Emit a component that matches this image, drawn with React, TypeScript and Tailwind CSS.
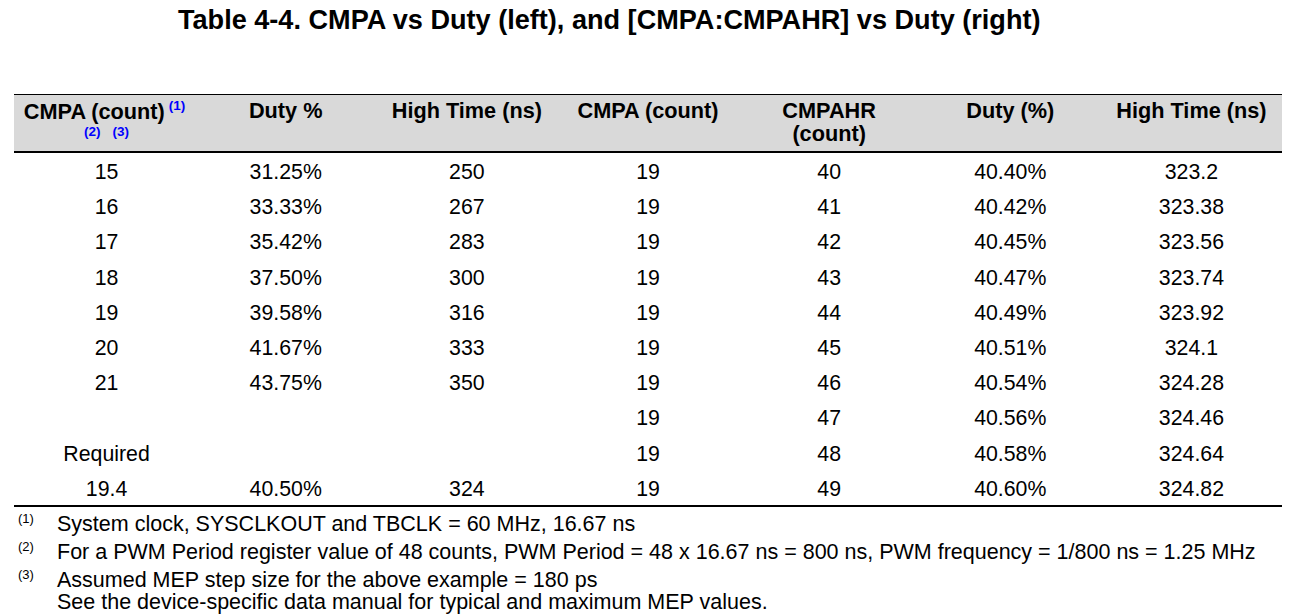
const left = [
  ["15", "31.25%", "250"],
  ["16", "33.33%", "267"],
  ["17", "35.42%", "283"],
  ["18", "37.50%", "300"],
  ["19", "39.58%", "316"],
  ["20", "41.67%", "333"],
  ["21", "43.75%", "350"],
  ["", "", ""],
  ["Required", "", ""],
  ["19.4", "40.50%", "324"],
]

const right = [
  ["19", "40", "40.40%", "323.2"],
  ["19", "41", "40.42%", "323.38"],
  ["19", "42", "40.45%", "323.56"],
  ["19", "43", "40.47%", "323.74"],
  ["19", "44", "40.49%", "323.92"],
  ["19", "45", "40.51%", "324.1"],
  ["19", "46", "40.54%", "324.28"],
  ["19", "47", "40.56%", "324.46"],
  ["19", "48", "40.58%", "324.64"],
  ["19", "49", "40.60%", "324.82"],
]

const notes = [
  ["(1)", "System clock, SYSCLKOUT and TBCLK = 60 MHz, 16.67 ns"],
  ["(2)", "For a PWM Period register value of 48 counts, PWM Period = 48 x 16.67 ns = 800 ns, PWM frequency = 1/800 ns = 1.25 MHz"],
  ["(3)", "Assumed MEP step size for the above example = 180 ps"],
]

function Ref({ n }: { n: string }) {
  return <span className="text-[13.5px] font-bold text-[#0000ff] align-[9px] leading-none">{n}</span>
}

export default function App() {
  const rows = left.map((l, i) => [...l, ...right[i]])
  return (
    <div className="w-[1292px] h-[614px] bg-white text-black font-['Liberation_Sans',Arial,sans-serif] overflow-hidden">
      <h1 className="pl-[178px] pt-[4px] text-[27.1px] font-bold leading-[32px]">
        Table 4-4. CMPA vs Duty (left), and [CMPA:CMPAHR] vs Duty (right)
      </h1>

      <div className="mt-[58px] ml-[14px] w-[1268px]">
        {/* header */}
        <div className="grid grid-cols-7 h-[59px] bg-[#d9d9d9] border-t border-black border-b-2 text-[21.7px] font-bold leading-[23px] text-center pt-[4px]">
          <div>
            CMPA (count)<span className="ml-[4px]"><Ref n="(1)" /></span>
            <div className="leading-[14px] mt-[2px] pl-[4px]">
              <Ref n="(2)" />&nbsp;&nbsp;<Ref n="(3)" />
            </div>
          </div>
          <div>Duty %</div>
          <div>High Time (ns)</div>
          <div>CMPA (count)</div>
          <div>CMPAHR<br />(count)</div>
          <div>Duty (%)</div>
          <div>High Time (ns)</div>
        </div>

        {/* body */}
        <div className="border-b-2 border-black text-[21.3px] text-center">
          {rows.map((r, i) => (
            <div key={i} className="grid grid-cols-7 h-[35.2px] items-center pt-[4px]">
              {r.map((c, j) => (
                <div key={j} className={j === 0 ? "pl-[4px]" : ""}>{c}</div>
              ))}
            </div>
          ))}
        </div>
      </div>

      {/* footnotes */}
      <div className="mt-[3px] text-[21.5px] leading-[28px]">
        {notes.map(([n, t]) => (
          <div key={n} className="flex">
            <span className="w-[57px] shrink-0 pl-[18px] text-[13px] leading-[18px]">{n}</span>
            <span>{t}</span>
          </div>
        ))}
        <div className="pl-[57px] -mt-[6px]">See the device-specific data manual for typical and maximum MEP values.</div>
      </div>
    </div>
  )
}
